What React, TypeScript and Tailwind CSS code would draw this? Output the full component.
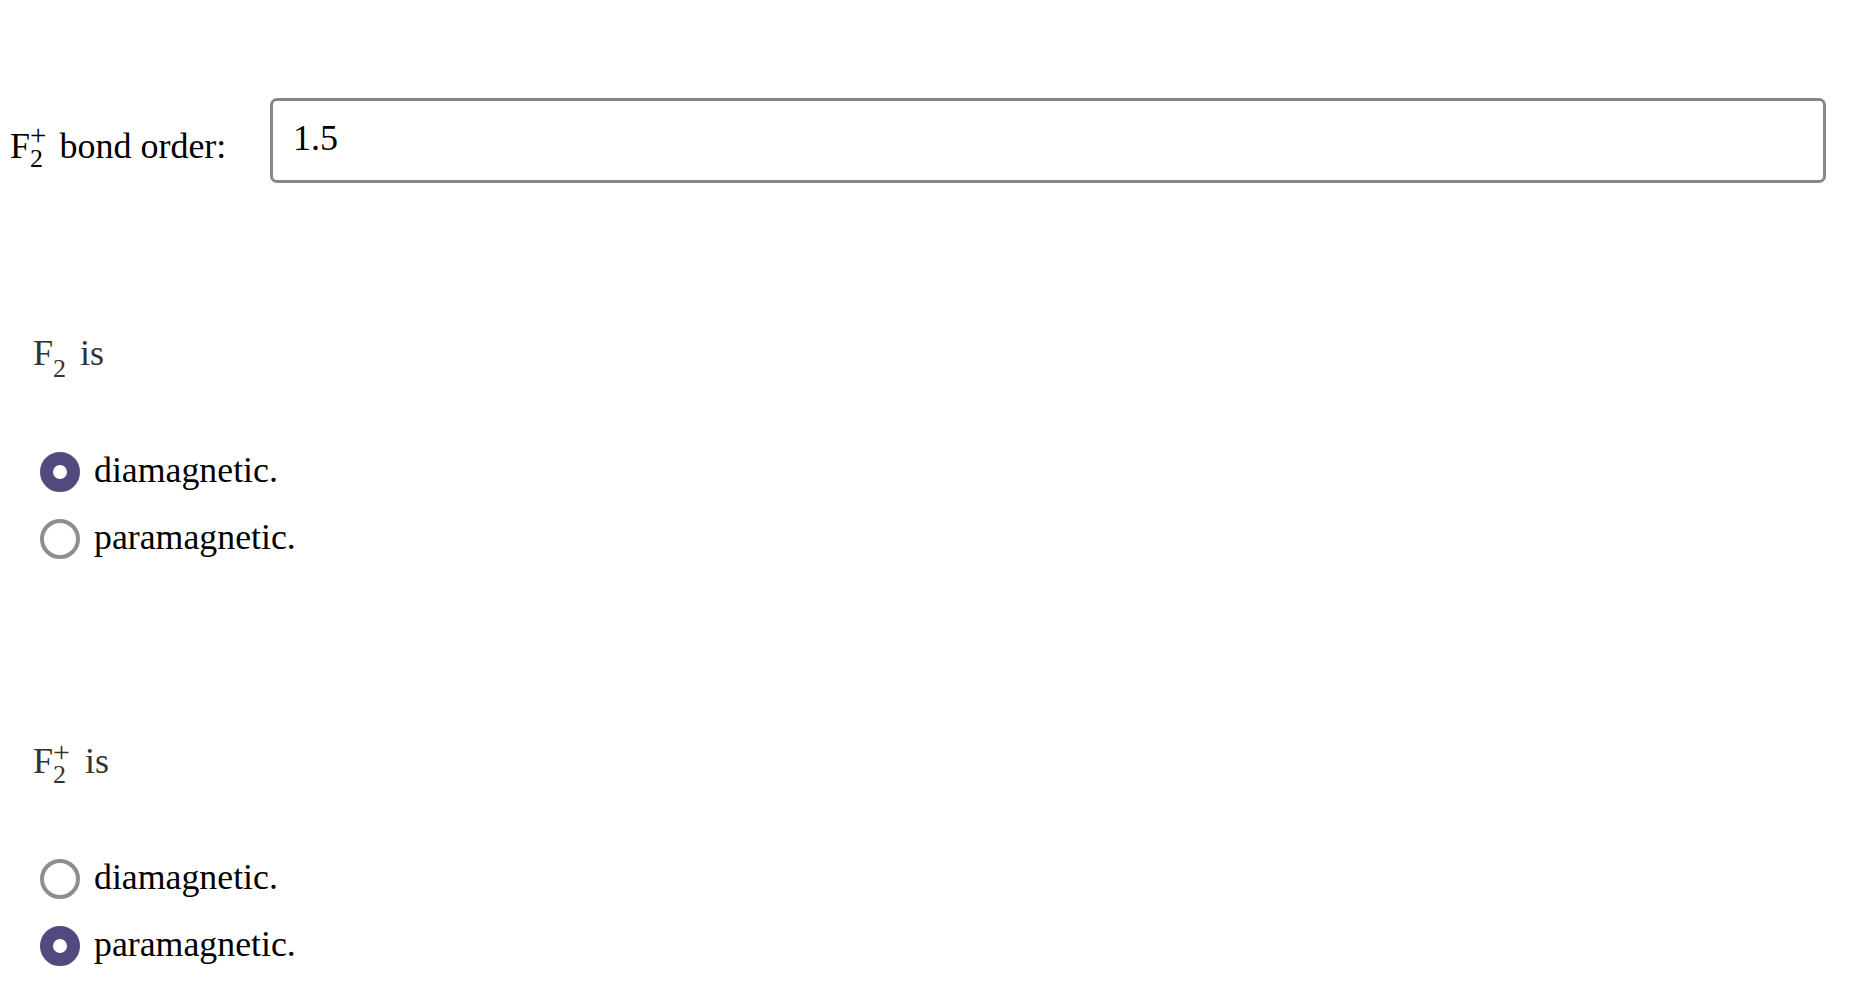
import React from "react";

function Radio({ checked, label }: { checked: boolean; label: string }) {
  return (
    <label className="flex h-[40px] items-center gap-[14px] pl-[40px]">
      <span
        className={
          checked
            ? "block h-[40px] w-[40px] shrink-0 rounded-full border-[13px] border-[#514a7e] bg-white"
            : "block h-[40px] w-[40px] shrink-0 rounded-full border-[4px] border-[#8e8e8e] bg-white"
        }
      />
      <span className="mb-[2px] text-[35.8px] leading-none text-black">{label}</span>
    </label>
  );
}

export default function App() {
  return (
    <div className="min-h-screen bg-white font-['Liberation_Serif','Times_New_Roman',serif] text-black">
      <div className="flex items-start pt-[98px]">
        <div className="w-[270px] shrink-0 pl-[10px] pt-[30px] text-[36px] leading-none">
          F<sub className="text-[26px] -bottom-[9px]">2</sub>
          <sup className="-ml-[13px] text-[29px] -top-[13px]">+</sup>
          <span className="ml-[13px]">bond order:</span>
        </div>
        <input
          readOnly
          defaultValue="1.5"
          className="h-[85px] w-[1556px] rounded-[7px] border-[3px] border-[#888888] bg-white pb-[6px] pl-[20px] font-['Liberation_Serif','Times_New_Roman',serif] text-[36px] text-black outline-none"
        />
      </div>

      <div className="mt-[152px] pl-[33px] text-[36px] leading-none text-[#333333]">
        F<sub className="text-[26px] -bottom-[12px]">2</sub>
        <span className="ml-[14px]">is</span>
      </div>
      <div className="mt-[81px] flex flex-col gap-[27px]">
        <Radio checked label="diamagnetic." />
        <Radio checked={false} label="paramagnetic." />
      </div>

      <div className="mt-[184px] pl-[33px] text-[36px] leading-none text-[#333333]">
        F<sub className="text-[26px] -bottom-[10px]">2</sub>
        <sup className="-ml-[13px] text-[30px] -top-[11px]">+</sup>
        <span className="ml-[15px]">is</span>
      </div>
      <div className="mt-[80px] flex flex-col gap-[27px]">
        <Radio checked={false} label="diamagnetic." />
        <Radio checked label="paramagnetic." />
      </div>
    </div>
  );
}
